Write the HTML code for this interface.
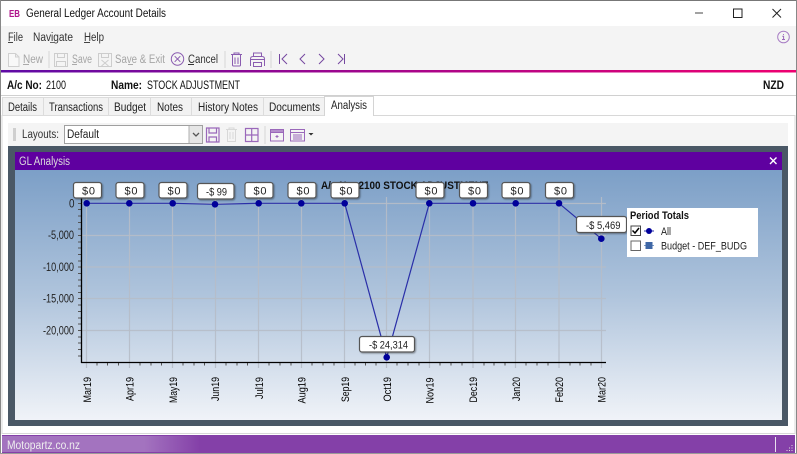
<!DOCTYPE html>
<html><head><meta charset="utf-8"><title>General Ledger Account Details</title>
<style>html,body{margin:0;padding:0;background:#fff}svg{display:block}text{font-family:"Liberation Sans",sans-serif;font-size:11.5px;fill:#222}</style></head>
<body>
<svg xmlns="http://www.w3.org/2000/svg" width="797" height="454" viewBox="0 0 797 454">
<defs>
<linearGradient id="g1" x1="0" x2="1" y1="0" y2="0"><stop offset="0" stop-color="#5f0ba5"/><stop offset="1" stop-color="#ee0070"/></linearGradient>
<linearGradient id="g2" x1="0" x2="0" y1="0" y2="1"><stop offset="0" stop-color="#7c9fc7"/><stop offset=".5" stop-color="#afc4dc"/><stop offset="1" stop-color="#f0f3f8"/></linearGradient>
<linearGradient id="g3" x1="0" x2="1" y1="0" y2="0"><stop offset="0" stop-color="#a373bf"/><stop offset=".72" stop-color="#a373bf"/><stop offset="1" stop-color="#8440a8"/></linearGradient>
<filter id="s" x="-20%" y="-20%" width="140%" height="150%"><feDropShadow dx="1" dy="1" stdDeviation=".8" flood-color="#000" flood-opacity=".35"/></filter>
</defs>
<rect width="797" height="454" fill="#fff"/>
<rect x="0" y="0" width="797" height="1" fill="#777"/>
<rect x="0" y="0" width="1" height="454" fill="#888"/>
<rect x="796" y="0" width="1" height="454" fill="#888"/>
<!-- title bar -->
<text x="9" y="17" style="font-size:10.5px;font-weight:bold;fill:#b0148c" textLength="11" lengthAdjust="spacingAndGlyphs">EB</text>
<text x="26" y="17" textLength="140" lengthAdjust="spacingAndGlyphs" style="fill:#111">General Ledger Account Details</text>
<path d="M695 13H703" stroke="#444" stroke-width="1"/>
<rect x="733.500" y="9" width="8.500" height="8.500" fill="none" stroke="#222" stroke-width="1"/>
<path d="M772.500 9L781 17.500M781 9L772.500 17.500" stroke="#222" stroke-width="1"/>
<!-- menu / toolbar -->
<rect x="1" y="26" width="795" height="44" fill="#f4f4f4"/>
<text x="8" y="41" textLength="15" lengthAdjust="spacingAndGlyphs" style="fill:#333">File</text><rect x="8" y="42" width="5" height="1" fill="#444"/>
<text x="33" y="41" textLength="40" lengthAdjust="spacingAndGlyphs" style="fill:#333">Navigate</text><rect x="50" y="42" width="5" height="1" fill="#666"/>
<text x="84" y="41" textLength="20" lengthAdjust="spacingAndGlyphs" style="fill:#333">Help</text><rect x="84" y="42" width="6" height="1" fill="#444"/>
<circle cx="783.500" cy="37" r="5.800" fill="none" stroke="#a77cc4" stroke-width="1"/><path d="M783.500 34v.9M782.300 36.200h1.300v3.200M782 39.500h3" stroke="#9a66bb" stroke-width="1" fill="none"/>
<!-- New -->
<path d="M8.500 53.500h7l3.500 3.500v9.500H8.500zM15.500 53.500V57H19" fill="#f8f8f8" stroke="#d0d0d0"/>
<text x="23" y="63" textLength="20" lengthAdjust="spacingAndGlyphs" style="fill:#a5a5a5">New</text><rect x="23" y="64" width="6" height="1" fill="#aaa"/>
<rect x="48.500" y="51" width="1" height="17" fill="#d6d6d6"/>
<!-- Save -->
<path d="M54.500 53.500h13v13h-13zM57.500 53.500v4h7v-4M56.500 66.500v-5h9v5" fill="none" stroke="#cdcdcd"/>
<text x="72" y="63" textLength="20" lengthAdjust="spacingAndGlyphs" style="fill:#a5a5a5">Save</text><rect x="72" y="64" width="5" height="1" fill="#aaa"/>
<path d="M98.500 53.500h13v13h-13zM101.500 53.500v4h7v-4M101.500 60l7 6M108.500 60l-7 6" fill="none" stroke="#cdcdcd"/>
<text x="115" y="63" textLength="50" lengthAdjust="spacingAndGlyphs" style="fill:#a5a5a5">Save &amp; Exit</text><rect x="128" y="64" width="5" height="1" fill="#aaa"/>
<!-- Cancel -->
<circle cx="177.500" cy="59" r="6.200" fill="none" stroke="#8a5cb0" stroke-width="1"/><path d="M174.700 56.200l5.600 5.600M180.300 56.200l-5.600 5.600" stroke="#8a5cb0" stroke-width="1"/>
<text x="188" y="63" textLength="30" lengthAdjust="spacingAndGlyphs" style="fill:#333">Cancel</text><rect x="188" y="64" width="6" height="1" fill="#333"/>
<rect x="224.500" y="51" width="1" height="17" fill="#d6d6d6"/>
<!-- trash -->
<path d="M231 54.500h11M234 54.500v-1.500h5v1.500M232.500 54.500v10.500q0 1 1 1h6q1 0 1-1V54.500M235 57.500v6.500M238 57.500v6.500" fill="none" stroke="#8a5cb0" stroke-width="1"/>
<!-- print -->
<path d="M253.500 56.500v-3.500h8v3.500M251 65.500h-.5v-6.500q0-2.500 2.500-2.500h9q2.500 0 2.500 2.500v6.500h-.5M253.500 62.500h8v4h-8zM251 59.500h13" fill="none" stroke="#8a5cb0" stroke-width="1"/>
<rect x="270.500" y="51" width="1" height="17" fill="#d6d6d6"/>
<!-- nav -->
<path d="M279.500 54v10M287 54l-5 5 5 5" fill="none" stroke="#75479f" stroke-width="1"/>
<path d="M305 54l-5 5 5 5" fill="none" stroke="#75479f" stroke-width="1"/>
<path d="M319 54l5 5-5 5" fill="none" stroke="#75479f" stroke-width="1"/>
<path d="M338 54l5 5-5 5M344.500 54v10" fill="none" stroke="#75479f" stroke-width="1"/>
<rect x="1" y="70" width="795" height="2.500" fill="url(#g1)"/>
<!-- info -->
<text x="7" y="89" textLength="35" lengthAdjust="spacingAndGlyphs" style="font-weight:bold;fill:#111">A/c No:</text>
<text x="46" y="89" textLength="20" lengthAdjust="spacingAndGlyphs" style="fill:#111">2100</text>
<text x="111" y="89" textLength="31" lengthAdjust="spacingAndGlyphs" style="font-weight:bold;fill:#111">Name:</text>
<text x="147" y="89" textLength="93" lengthAdjust="spacingAndGlyphs" style="fill:#111">STOCK ADJUSTMENT</text>
<text x="763" y="89" textLength="21" lengthAdjust="spacingAndGlyphs" style="font-weight:bold;fill:#111">NZD</text>
<rect x="1" y="95" width="795" height="1" fill="#d0d0d0"/>
<!-- tabs -->
<rect x="2" y="115.500" width="793" height="318" fill="#fff" stroke="#d8d8d8"/>
<g fill="#f2f2f2" stroke="#dcdcdc">
<rect x="2.500" y="97.500" width="41" height="18"/>
<rect x="43.500" y="97.500" width="65" height="18"/>
<rect x="108.500" y="97.500" width="42" height="18"/>
<rect x="150.500" y="97.500" width="41" height="18"/>
<rect x="191.500" y="97.500" width="72" height="18"/>
<rect x="263.500" y="97.500" width="61" height="18"/>
</g>
<path d="M324.500 116V96.500H373.500V116" fill="#fff" stroke="#d4d4d4"/>
<text x="8" y="111" textLength="29" lengthAdjust="spacingAndGlyphs">Details</text>
<text x="49" y="111" textLength="54" lengthAdjust="spacingAndGlyphs">Transactions</text>
<text x="114" y="111" textLength="32" lengthAdjust="spacingAndGlyphs">Budget</text>
<text x="157" y="111" textLength="26" lengthAdjust="spacingAndGlyphs">Notes</text>
<text x="198" y="111" textLength="60" lengthAdjust="spacingAndGlyphs">History Notes</text>
<text x="269" y="111" textLength="51" lengthAdjust="spacingAndGlyphs">Documents</text>
<text x="331" y="109" textLength="36" lengthAdjust="spacingAndGlyphs">Analysis</text>
<!-- layouts bar -->
<rect x="8" y="123" width="780" height="23" fill="#f4f4f4"/>
<rect x="13" y="128" width="3" height="13" fill="#cfcfcf"/>
<text x="22" y="138" textLength="37" lengthAdjust="spacingAndGlyphs" style="fill:#333">Layouts:</text>
<rect x="64.500" y="125.500" width="138" height="18" fill="#fff" stroke="#a0a0a0"/>
<rect x="189" y="126" width="13" height="17" fill="#e6e6e6"/><rect x="188.500" y="126" width="1" height="17" fill="#b0b0b0"/>
<path d="M193 133l3 3 3-3" fill="none" stroke="#555" stroke-width="1.300"/>
<text x="67" y="138" textLength="32" lengthAdjust="spacingAndGlyphs" style="fill:#222">Default</text>
<path d="M206.500 128h12.500v14h-12.500zM209 128v5h7.500v-5M209 142v-5h7.500v5" fill="none" stroke="#9a68ba" stroke-width="1.200"/>
<path d="M226 129.500h11M229 129.500V128h5v1.500M227.500 129.500V141.500h8V129.500M230 132v7M233 132v7" fill="none" stroke="#d8d8d8" stroke-width="1"/>
<path d="M245.500 128.500h12.500v13h-12.500zM251.700 128.500v13M245.500 135h12.500" fill="none" stroke="#9a68ba" stroke-width="1.200"/>
<rect x="264.500" y="126" width="1" height="18" fill="#d6d6d6"/>
<path d="M270.500 129.500h13v11.500h-13zM270.500 132.500h13M275.500 136.500h3M277 135v3" fill="none" stroke="#9a68ba" stroke-width="1"/><rect x="271" y="130" width="12" height="2" fill="#b48fcb"/>
<path d="M290.500 129.500h14v11.500h-14zM290.500 132.500h14M293 135h9M293 137h9M293 139h9" fill="none" stroke="#9a68ba" stroke-width="1"/>
<path d="M308.500 133h5l-2.500 2.500z" fill="#333"/>
<!-- panel -->
<rect x="8" y="146" width="780" height="280" fill="#4a5866"/>
<rect x="15" y="152" width="767" height="18" fill="#5f00a0"/>
<text x="19" y="165" textLength="51" lengthAdjust="spacingAndGlyphs" style="fill:#ddd">GL Analysis</text>
<path d="M770 157.500l6.500 6.500M776.500 157.500l-6.500 6.500" stroke="#fff" stroke-width="1.400"/>
<rect x="15" y="170" width="767" height="250" fill="url(#g2)"/>
<!-- chart title -->
<text x="321" y="189" textLength="167" lengthAdjust="spacingAndGlyphs" style="font-weight:bold;fill:#111;font-size:11px">A/c No: 2100 STOCK ADJUSTMENT</text>
<!-- grid -->
<g stroke="#b6bdc8" stroke-opacity=".9" stroke-width="1.200">
<path d="M86.500 197V368M129.500 197V368M172.500 197V368M215.500 197V368M258.500 197V368M301.500 197V368M344.500 197V368M386.500 197V368M429.500 197V368M473 197V368M515.500 197V368M559 197V368M601.500 197V368"/>
<path d="M78 203.500H606M78 235.500H606M78 267H606M78 298.500H606M78 330.500H606"/>
</g>
<!-- axis ticks -->
<path d="M78 203.500h3M78 209.500h3M78 216h3M78 222.500h3M78 229h3M78 235.500h3M78 242h3M78 248h3M78 254.500h3M78 261h3M78 267h3M78 273.500h3M78 280h3M78 286h3M78 292.500h3M78 298.500h3M78 305h3M78 311.500h3M78 318h3M78 324h3M78 330.500h3M78 337h3M78 343h3M78 349.500h3M78 356h3" stroke="#555" stroke-width="1"/>
<path d="M97 363v2.500M107.500 363v2.500M118.500 363v2.500M140 363v2.500M151 363v2.500M161.500 363v2.500M183 363v2.500M194 363v2.500M204.500 363v2.500M226 363v2.500M237 363v2.500M247.500 363v2.500M269 363v2.500M280 363v2.500M291 363v2.500M312 363v2.500M323 363v2.500M334 363v2.500M355 363v2.500M365.500 363v2.500M376 363v2.500M397 363v2.500M408 363v2.500M419 363v2.500M440 363v2.500M451 363v2.500M462 363v2.500M484 363v2.500M494 363v2.500M505 363v2.500M526 363v2.500M537 363v2.500M548 363v2.500M570 363v2.500M580 363v2.500M591 363v2.500" stroke="#555" stroke-width="1"/>
<path d="M81.500 197V363" stroke="#000" stroke-width="1.300"/>
<path d="M81 362.500H606" stroke="#000" stroke-width="1.300"/>
<!-- y labels -->
<g style="fill:#111">
<text x="69" y="207.500" textLength="5.500" lengthAdjust="spacingAndGlyphs">0</text>
<text x="48" y="239" textLength="26" lengthAdjust="spacingAndGlyphs">-5,000</text>
<text x="43" y="271" textLength="31" lengthAdjust="spacingAndGlyphs">-10,000</text>
<text x="43" y="302.500" textLength="31" lengthAdjust="spacingAndGlyphs">-15,000</text>
<text x="43" y="334.500" textLength="31" lengthAdjust="spacingAndGlyphs">-20,000</text>
</g>
<!-- x labels -->
<text transform="translate(91,377) rotate(-90)" text-anchor="end" textLength="25.500" lengthAdjust="spacingAndGlyphs" style="fill:#000;font-size:11px">Mar19</text>
<text transform="translate(133.500,377) rotate(-90)" text-anchor="end" textLength="24" lengthAdjust="spacingAndGlyphs" style="fill:#000;font-size:11px">Apr19</text>
<text transform="translate(177,377) rotate(-90)" text-anchor="end" textLength="26" lengthAdjust="spacingAndGlyphs" style="fill:#000;font-size:11px">May19</text>
<text transform="translate(219,377) rotate(-90)" text-anchor="end" textLength="24" lengthAdjust="spacingAndGlyphs" style="fill:#000;font-size:11px">Jun19</text>
<text transform="translate(263,377) rotate(-90)" text-anchor="end" textLength="22" lengthAdjust="spacingAndGlyphs" style="fill:#000;font-size:11px">Jul19</text>
<text transform="translate(305.500,377) rotate(-90)" text-anchor="end" textLength="26.500" lengthAdjust="spacingAndGlyphs" style="fill:#000;font-size:11px">Aug19</text>
<text transform="translate(349,377) rotate(-90)" text-anchor="end" textLength="25" lengthAdjust="spacingAndGlyphs" style="fill:#000;font-size:11px">Sep19</text>
<text transform="translate(391,377) rotate(-90)" text-anchor="end" textLength="24.500" lengthAdjust="spacingAndGlyphs" style="fill:#000;font-size:11px">Oct19</text>
<text transform="translate(433.500,377.500) rotate(-90)" text-anchor="end" textLength="26" lengthAdjust="spacingAndGlyphs" style="fill:#000;font-size:11px">Nov19</text>
<text transform="translate(477,377) rotate(-90)" text-anchor="end" textLength="25.500" lengthAdjust="spacingAndGlyphs" style="fill:#000;font-size:11px">Dec19</text>
<text transform="translate(520,377) rotate(-90)" text-anchor="end" textLength="24" lengthAdjust="spacingAndGlyphs" style="fill:#000;font-size:11px">Jan20</text>
<text transform="translate(563,377) rotate(-90)" text-anchor="end" textLength="25.500" lengthAdjust="spacingAndGlyphs" style="fill:#000;font-size:11px">Feb20</text>
<text transform="translate(605.500,377) rotate(-90)" text-anchor="end" textLength="25.500" lengthAdjust="spacingAndGlyphs" style="fill:#000;font-size:11px">Mar20</text>
<!-- line -->
<polyline points="86.700,203.300 129.300,203.300 172.700,203.300 215,204.300 258.700,203.300 301.300,203.300 344.700,203.300 386.700,357.300 429.300,203.300 473,203.300 515.700,203.300 559,203.300 601.300,238.700" fill="none" stroke="#2a2fa8" stroke-width="1.200"/>
<g fill="#00009a">
<circle cx="86.700" cy="203.300" r="3.300"/><circle cx="129.300" cy="203.300" r="3.300"/><circle cx="172.700" cy="203.300" r="3.300"/><circle cx="215" cy="204.300" r="3.300"/><circle cx="258.700" cy="203.300" r="3.300"/><circle cx="301.300" cy="203.300" r="3.300"/><circle cx="344.700" cy="203.300" r="3.300"/><circle cx="386.700" cy="357.300" r="3.300"/><circle cx="429.300" cy="203.300" r="3.300"/><circle cx="473" cy="203.300" r="3.300"/><circle cx="515.700" cy="203.300" r="3.300"/><circle cx="559" cy="203.300" r="3.300"/><circle cx="601.300" cy="238.700" r="3.300"/>
</g>
<!-- data labels -->
<g fill="#fff" stroke="#555" stroke-width="1.200" filter="url(#s)">
<rect x="73.500" y="182.500" width="28" height="15.500" rx="2.500"/>
<rect x="116" y="182.500" width="28" height="15.500" rx="2.500"/>
<rect x="159" y="182.500" width="28" height="15.500" rx="2.500"/>
<rect x="197.500" y="183.500" width="36.500" height="15.500" rx="2.500"/>
<rect x="245" y="182.500" width="28" height="15.500" rx="2.500"/>
<rect x="288" y="182.500" width="28" height="15.500" rx="2.500"/>
<rect x="331" y="182.500" width="28" height="15.500" rx="2.500"/>
<rect x="416" y="182.500" width="28" height="15.500" rx="2.500"/>
<rect x="459.500" y="182.500" width="28" height="15.500" rx="2.500"/>
<rect x="502" y="182.500" width="28" height="15.500" rx="2.500"/>
<rect x="545.500" y="182.500" width="28" height="15.500" rx="2.500"/>
<rect x="576.500" y="216.500" width="50" height="16" rx="2.500"/>
<rect x="359.500" y="336.500" width="55" height="15.500" rx="2.500"/>
</g>
<text x="82" y="194.500" textLength="13" style="fill:#222;font-size:11px">$ 0</text>
<text x="124.500" y="194.500" textLength="13" style="fill:#222;font-size:11px">$ 0</text>
<text x="167.500" y="194.500" textLength="13" style="fill:#222;font-size:11px">$ 0</text>
<text x="206" y="195.500" textLength="21" lengthAdjust="spacingAndGlyphs" style="fill:#222;font-size:11px">-$ 99</text>
<text x="253.500" y="194.500" textLength="13" style="fill:#222;font-size:11px">$ 0</text>
<text x="296.500" y="194.500" textLength="13" style="fill:#222;font-size:11px">$ 0</text>
<text x="339.500" y="194.500" textLength="13" style="fill:#222;font-size:11px">$ 0</text>
<text x="424.500" y="194.500" textLength="13" style="fill:#222;font-size:11px">$ 0</text>
<text x="468" y="194.500" textLength="13" style="fill:#222;font-size:11px">$ 0</text>
<text x="510.500" y="194.500" textLength="13" style="fill:#222;font-size:11px">$ 0</text>
<text x="554" y="194.500" textLength="13" style="fill:#222;font-size:11px">$ 0</text>
<text x="586" y="229" textLength="34.500" lengthAdjust="spacingAndGlyphs" style="fill:#222;font-size:11px">-$ 5,469</text>
<text x="369" y="348.500" textLength="39" lengthAdjust="spacingAndGlyphs" style="fill:#222;font-size:11px">-$ 24,314</text>
<!-- legend -->
<rect x="627" y="208" width="131" height="49" fill="#fff"/>
<text x="630" y="219" textLength="59" lengthAdjust="spacingAndGlyphs" style="font-weight:bold;fill:#111;font-size:11px">Period Totals</text>
<rect x="631" y="226" width="9.500" height="9.500" fill="#fff" stroke="#444"/>
<path d="M632.500 230.500l2.500 2.500 4-5" fill="none" stroke="#000" stroke-width="1.500"/>
<path d="M644 231h10" stroke="#2a2fa8" stroke-width="1"/><circle cx="649" cy="231" r="3" fill="#00009a"/>
<text x="661" y="235" textLength="10" lengthAdjust="spacingAndGlyphs" style="fill:#222;font-size:11px">All</text>
<rect x="631" y="241" width="9.500" height="9.500" fill="#fff" stroke="#666"/>
<path d="M644 245.500h10" stroke="#7a9ac6" stroke-width="1"/><rect x="645.500" y="242" width="7" height="7" fill="#3f67a6"/>
<text x="661" y="249.500" textLength="86" lengthAdjust="spacingAndGlyphs" style="fill:#222;font-size:11px">Budget - DEF_BUDG</text>
<!-- status -->
<rect x="2" y="435" width="793" height="18" fill="#8440a8"/>
<rect x="2" y="436" width="198" height="16" fill="url(#g3)"/>
<text x="7" y="449" textLength="73" lengthAdjust="spacingAndGlyphs" style="fill:#eee">Motopartz.co.nz</text>
<rect x="775" y="437" width="1" height="15" fill="#e8e0ee"/>
<path d="M789 450.500h1M786.500 450.500h1M791.500 450.500h1M789 448h1M791.500 448h1M791.500 445.500h1" stroke="#ddd" stroke-width="1"/>
<rect x="0" y="453" width="797" height="1" fill="#999"/>
</svg>
</body></html>
